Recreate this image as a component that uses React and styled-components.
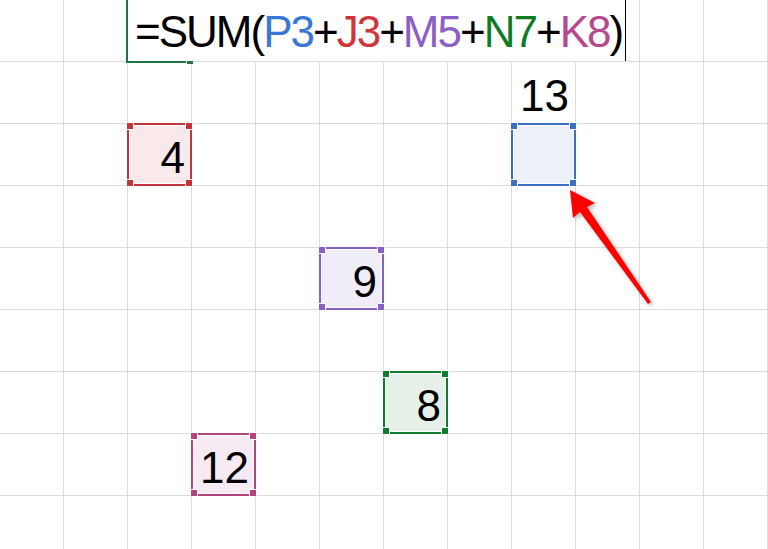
import React from 'react';
import styled, { createGlobalStyle } from 'styled-components';

const GlobalStyle = createGlobalStyle`
  html, body {
    margin: 0;
    padding: 0;
    background: #fff;
  }
`;

const COLS = 12;
const ROWS = 9;

const tones = {
  red: { line: '#c4343c', fill: '#f9e9ea', text: '#d0353a' },
  blue: { line: '#3a6fc4', fill: '#ebf0f9', text: '#3a78d6' },
  purple: { line: '#8660c2', fill: '#f1edf8', text: '#8b5fc6' },
  green: { line: '#107c2e', fill: '#e5f1e8', text: '#0f7b26' },
  magenta: { line: '#b1437f', fill: '#f7ebf3', text: '#b54a8f' },
};

// cells referenced by the formula, keyed "col-row"
const refs = {
  '2-2': { value: '4', tone: 'red' },
  '8-2': { value: '', tone: 'blue' },
  '5-4': { value: '9', tone: 'purple' },
  '6-6': { value: '8', tone: 'green' },
  '3-7': { value: '12', tone: 'magenta' },
};

const plain = {
  '8-1': '13',
};

const formula = [
  { t: '=SUM(' },
  { t: 'P3', tone: 'blue' },
  { t: '+' },
  { t: 'J3', tone: 'red' },
  { t: '+' },
  { t: 'M5', tone: 'purple' },
  { t: '+' },
  { t: 'N7', tone: 'green' },
  { t: '+' },
  { t: 'K8', tone: 'magenta' },
  { t: ')' },
];

const Sheet = styled.div`
  position: relative;
  width: 768px;
  height: 549px;
  overflow: hidden;
  background: #fff;
`;

const Grid = styled.div`
  display: grid;
  grid-template-columns: repeat(${COLS}, 64px);
  grid-template-rows: repeat(${ROWS}, 62px);
`;

const Cell = styled.div`
  position: relative;
  box-sizing: border-box;
  border-right: 1px solid #dcdcdc;
  border-bottom: 1px solid #dcdcdc;
  background: ${p => p.fill || '#fff'};
  display: flex;
  align-items: flex-end;
  justify-content: flex-end;
  padding: 0 6px 5px 0;
  font-family: "Liberation Sans", Arial, sans-serif;
  font-size: 44px;
  line-height: 1;
  color: #000;
`;

const RefFrame = styled.div`
  position: absolute;
  top: -1px;
  left: -1px;
  width: 65px;
  height: 63px;
  box-sizing: border-box;
  border: 2px solid ${p => p.line};
  box-shadow: inset 0 0 0 1px #fff;
  z-index: 2;
  pointer-events: none;
`;

const Handle = styled.span`
  position: absolute;
  width: 8px;
  height: 8px;
  box-sizing: border-box;
  background: ${p => p.line};
  border: 1px solid #fff;
  ${p => (p.y === 'top' ? 'top: -3px;' : 'bottom: -3px;')}
  ${p => (p.x === 'left' ? 'left: -3px;' : 'right: -3px;')}
`;

const ActiveFrame = styled.div`
  position: absolute;
  top: 0;
  left: -2px;
  width: 66px;
  height: 63px;
  box-sizing: border-box;
  border: 2px solid #217346;
  z-index: 3;
`;

const FillHandle = styled.span`
  position: absolute;
  right: -3px;
  bottom: -3px;
  width: 6px;
  height: 5px;
  background: #217346;
  border-left: 1px solid #fff;
`;

const Editor = styled.div`
  position: absolute;
  top: 0;
  left: 0;
  width: 498px;
  height: 61px;
  box-sizing: border-box;
  background: #fff;
  border-right: 1px solid #000;
  z-index: 4;
  padding: 2px 0 0 7px;
  font-family: "Liberation Sans", Arial, sans-serif;
  font-size: 44px;
  letter-spacing: -2px;
  line-height: 59px;
  white-space: nowrap;
  color: #000;
`;

const Token = styled.span`
  color: ${p => (p.tone ? tones[p.tone].text : '#000')};
`;

const Arrow = styled.svg`
  position: absolute;
  inset: 0;
  width: 768px;
  height: 549px;
  pointer-events: none;
  z-index: 5;
  filter: drop-shadow(2px 2px 2px rgba(0, 0, 0, 0.3));
`;

const corners = [
  ['top', 'left'],
  ['top', 'right'],
  ['bottom', 'left'],
  ['bottom', 'right'],
];

function RefCell({ value, tone }) {
  const t = tones[tone];
  return (
    <Cell fill={t.fill}>
      {value}
      <RefFrame line={t.line}>
        {corners.map(([y, x]) => (
          <Handle key={y + x} y={y} x={x} line={t.line} />
        ))}
      </RefFrame>
    </Cell>
  );
}

function ActiveCell() {
  return (
    <Cell>
      <ActiveFrame>
        <FillHandle />
      </ActiveFrame>
      <Editor>
        {formula.map((part, i) => (
          <Token key={i} tone={part.tone}>{part.t}</Token>
        ))}
      </Editor>
    </Cell>
  );
}

export default function App() {
  const cells = [];
  for (let r = 0; r < ROWS; r++) {
    for (let c = 0; c < COLS; c++) {
      const key = `${c}-${r}`;
      if (c === 2 && r === 0) {
        cells.push(<ActiveCell key={key} />);
      } else if (refs[key]) {
        cells.push(<RefCell key={key} {...refs[key]} />);
      } else {
        cells.push(<Cell key={key}>{plain[key] || ''}</Cell>);
      }
    }
  }

  return (
    <>
      <GlobalStyle />
      <Sheet>
        <Grid>{cells}</Grid>
        <Arrow viewBox="0 0 768 549">
          <polygon
            fill="#ff0000"
            points="570,190 595,203 587,207 651,302 648,304 580,212 573,218"
          />
        </Arrow>
      </Sheet>
    </>
  );
}
